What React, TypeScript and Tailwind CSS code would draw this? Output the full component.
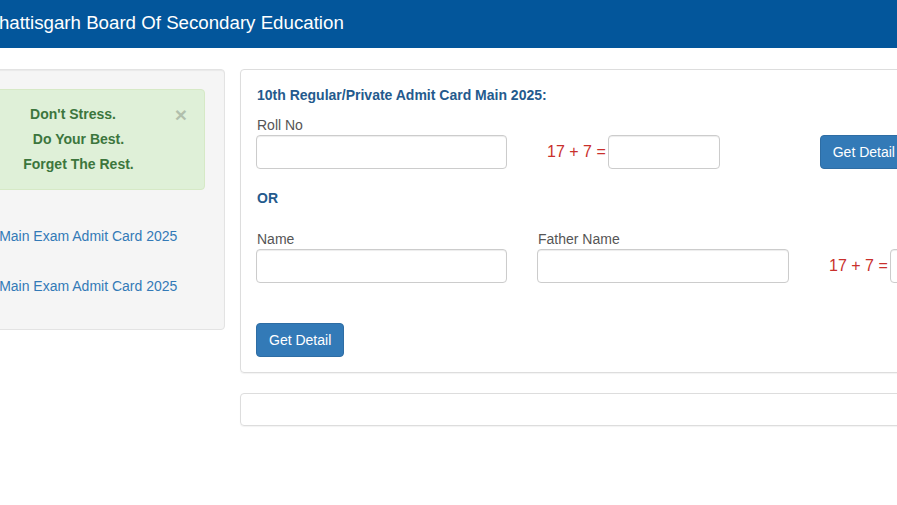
import React from "react";

const inputCls =
  "h-[34px] border border-[#ccc] rounded-[4px] bg-white shadow-[inset_0_1px_1px_rgba(0,0,0,0.075)] shrink-0";

function Captcha({ ml, inputW }: { ml: string; inputW: string }) {
  return (
    <div className={`flex items-center shrink-0 ${ml}`}>
      <span className="text-[16px] text-[#c9302c] whitespace-nowrap">17 + 7 =</span>
      <input className={`${inputCls} ml-[2px] ${inputW}`} />
    </div>
  );
}

export default function App() {
  return (
    <div
      className="w-[897px] h-[505px] overflow-hidden bg-white text-[14px] text-[#333]"
      style={{ fontFamily: '"Liberation Sans", Arial, sans-serif' }}
    >
      <div className="h-[48px] bg-[#03569b] flex items-center overflow-hidden">
        <span className="text-[18.7px] text-white whitespace-nowrap ml-[-25px] leading-none mt-[-2px]">
          Chhattisgarh Board Of Secondary Education
        </span>
      </div>

      <div className="flex pt-[21px]">
        {/* Left well */}
        <div className="ml-[-81px] w-[306px] h-[261px] shrink-0 bg-[#f5f5f5] border border-[#e3e3e3] rounded-[4px] p-[19px] shadow-[inset_0_1px_1px_rgba(0,0,0,0.05)]">
          <div className="relative h-[101px] bg-[#dff0d8] border border-[#d6e9c6] rounded-[4px] pt-[12px] text-[#3c763d] font-bold text-center leading-[25px]">
            <div className="pl-[2px]">Don't Stress.</div>
            <div className="pl-[13px]">Do Your Best.</div>
            <div className="pl-[13px]">Forget The Rest.</div>
            <span className="absolute right-[17px] top-[14px] text-[21px] leading-[21px] font-bold text-black opacity-20">
              ×
            </span>
          </div>
          <div className="mt-[36px] pl-[29px] flex flex-col gap-[30px] leading-[20px] text-[#337ab7] whitespace-nowrap">
            <a>10th Main Exam Admit Card 2025</a>
            <a>12th Main Exam Admit Card 2025</a>
          </div>
        </div>

        {/* Main */}
        <div className="ml-[15px] w-[720px] shrink-0 flex flex-col">
          <div className="h-[304px] border border-[#ddd] rounded-[4px] px-[15px] pt-[15px] shadow-[0_1px_1px_rgba(0,0,0,0.05)]">
            <div className="leading-[20px] text-[14px] font-bold text-[#245a8d] pl-[1px] whitespace-nowrap">
              10th Regular/Private Admit Card Main 2025:
            </div>
            <div className="mt-[10px] leading-[20px] text-[#555] pl-[1px]">Roll No</div>
            <div className="flex items-center">
              <input className={`${inputCls} w-[251px]`} />
              <Captcha ml="ml-[40px]" inputW="w-[112px]" />
              <button className="ml-[100px] shrink-0 h-[34px] px-[12px] bg-[#337ab7] border border-[#2e6da4] rounded-[4px] text-white whitespace-nowrap">
                Get Detail
              </button>
            </div>
            <div className="mt-[19px] leading-[20px] font-bold text-[#245a8d] pl-[1px]">OR</div>
            <div className="mt-[21px] flex">
              <div className="w-[281px] shrink-0 leading-[20px] text-[#555] pl-[1px]">Name</div>
              <div className="leading-[20px] text-[#555] pl-[1px]">Father Name</div>
            </div>
            <div className="flex items-center">
              <input className={`${inputCls} w-[251px]`} />
              <input className={`${inputCls} ml-[30px] w-[252px]`} />
              <Captcha ml="ml-[40px]" inputW="w-[112px]" />
            </div>
            <button className="mt-[40px] h-[34px] px-[12px] bg-[#337ab7] border border-[#2e6da4] rounded-[4px] text-white">
              Get Detail
            </button>
          </div>
          <div className="mt-[20px] h-[33px] border border-[#ddd] rounded-[4px] shadow-[0_1px_1px_rgba(0,0,0,0.05)]" />
        </div>
      </div>
    </div>
  );
}
